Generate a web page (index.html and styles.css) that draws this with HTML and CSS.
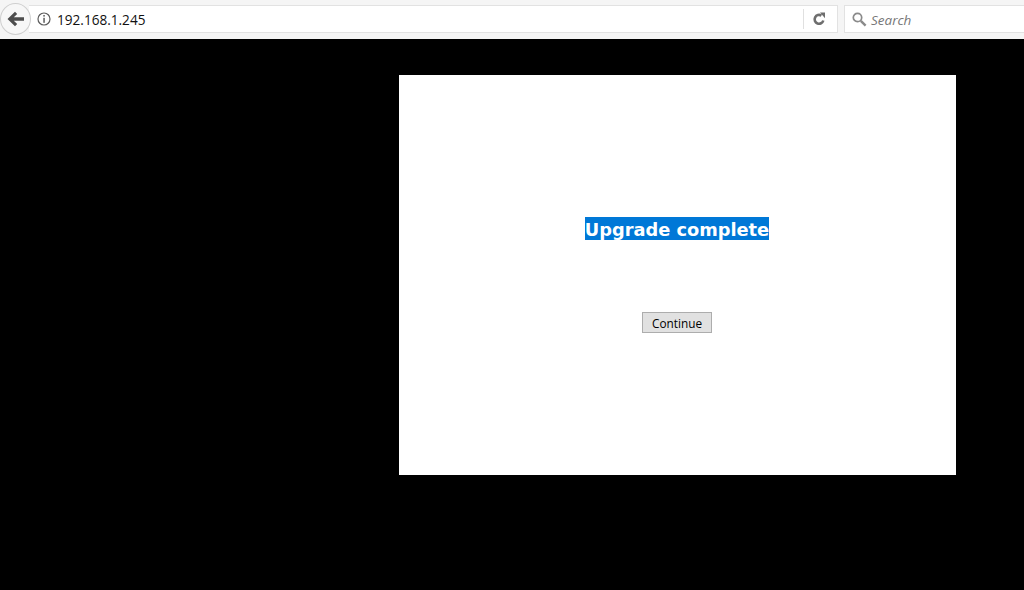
FILE: index.html
```html
<!DOCTYPE html>
<html lang="en">
  <head>
    <meta charset="UTF-8" />
    <title>192.168.1.245</title>
    <link rel="stylesheet" href="styles.css">
  </head>
  <body>
    <div class="toolbar">
      <div class="back-button">
        <svg width="18" height="16" viewBox="0 0 18 16">
          <path d="M0.5 8 L8 0.8 L10.2 3 L6.8 6.3 H17 V9.7 H6.8 L10.2 13 L8 15.2 Z" fill="#4d4d4d" />
        </svg>
      </div>
      <div class="url-bar">
        <svg class="info-icon" width="14" height="14" viewBox="0 0 14 14">
          <circle cx="7" cy="7" r="6" fill="none" stroke="#5c5c5c" stroke-width="1.2" />
          <rect x="6.3" y="3" width="1.5" height="1.6" fill="#5c5c5c" />
          <rect x="6.3" y="5.8" width="1.5" height="5" fill="#5c5c5c" />
        </svg>
        <span class="url-text">192.168.1.245</span>
        <div class="reload">
          <svg width="14" height="14" viewBox="0 0 14 14">
            <path d="M11.3 8.5 A4.4 4.4 0 1 1 9.4 3.6" fill="none" stroke="#6e6e6e" stroke-width="2.6" />
            <path d="M8 0.6 L13 0.6 L13 6.2 Z" fill="#6e6e6e" />
          </svg>
        </div>
      </div>
      <div class="search-bar">
        <svg width="15" height="15" viewBox="0 0 15 15">
          <circle cx="5.5" cy="5.5" r="4.2" fill="none" stroke="#8a8a8a" stroke-width="1.7" />
          <path d="M8.8 8.8 L13.6 13.6" stroke="#8a8a8a" stroke-width="2.4" />
        </svg>
        <span class="search-text">Search</span>
      </div>
    </div>

    <div class="page">
      <div class="dialog">
        <h1 class="dialog-title"><span class="selected">Upgrade complete</span></h1>
        <button class="continue-button">Continue</button>
      </div>
    </div>
  </body>
</html>
```

FILE: styles.css
```css
body {
  margin: 0;
  height: 590px;
  overflow: hidden;
  background-color: #000;
  font-family: "Open Sans", sans-serif;
}

.toolbar {
  display: flex;
  align-items: center;
  height: 39px;
  box-sizing: border-box;
  padding: 5px 0 6px 0;
  background-color: #f5f5f5;
}

.back-button {
  display: flex;
  align-items: center;
  justify-content: center;
  flex-shrink: 0;
  width: 29px;
  height: 30px;
  margin-right: -2px;
  z-index: 1;
  background-color: #f7f7f7;
  border: 1px solid #cfcfcf;
  border-radius: 50%;
}

.url-bar {
  display: flex;
  align-items: center;
  width: 809px;
  height: 28px;
  box-sizing: border-box;
  padding-left: 8px;
  background-color: #fff;
  border: 1px solid #e2e2e2;
  border-left: none;
}

.info-icon {
  margin-right: 6px;
}

.url-text {
  flex: 1;
  padding-top: 1px;
  font-size: 13.6px;
  color: #111;
}

.reload {
  display: flex;
  align-items: center;
  justify-content: center;
  width: 29px;
  height: 20px;
  padding-right: 4px;
  border-left: 1px solid #e0e0e0;
}

.search-bar {
  display: flex;
  align-items: center;
  flex: 1;
  height: 28px;
  box-sizing: border-box;
  margin-left: 6px;
  padding-left: 7px;
  background-color: #fff;
  border: 1px solid #e2e2e2;
  border-right: none;
}

.search-text {
  margin-left: 4px;
  padding-top: 1px;
  font-size: 13.5px;
  font-style: italic;
  color: #777;
}

.page {
  display: flex;
  padding: 36px 68px 0 399px;
}

.dialog {
  display: flex;
  flex-direction: column;
  align-items: center;
  width: 557px;
  height: 400px;
  box-sizing: border-box;
  padding: 142px 1px 0 0;
  background-color: #fff;
}

.dialog-title {
  margin: 0 0 71px 0;
  font-family: "DejaVu Sans", sans-serif;
  font-size: 17.8px;
  font-weight: bold;
  line-height: 23px;
}

.selected {
  display: inline-block;
  padding-top: 1px;
  height: 22px;
  background-color: #0078d7;
  color: #fff;
}

.continue-button {
  width: 70px;
  height: 21px;
  padding: 1px 0 0 0;
  background-color: #e1e1e1;
  border: 1px solid #adadad;
  border-radius: 0;
  font-family: "Open Sans", sans-serif;
  font-size: 11.8px;
  color: #000;
}
```
